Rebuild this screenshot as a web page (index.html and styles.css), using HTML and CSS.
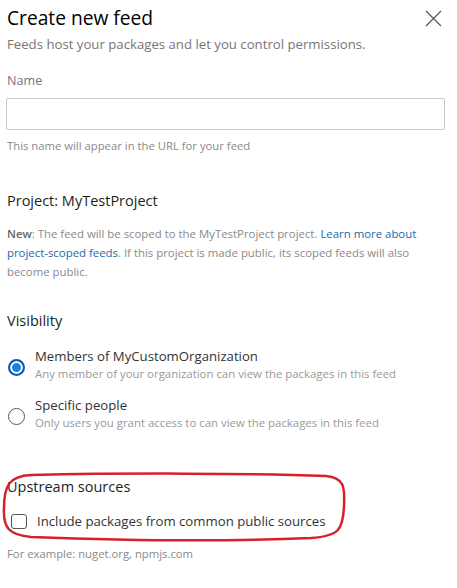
FILE: index.html
```html
<!DOCTYPE html>
<html lang="en">
<head>
    <meta charset="UTF-8">
    <meta name="viewport" content="width=device-width, initial-scale=1.0">
    <title>Create new feed</title>
    <link rel="stylesheet" href="styles.css">
</head>
<body>

    <div class="panel">
        <!-- Header -->
        <div class="panel-header">
            <h1>Create new feed</h1>
            <button class="close-btn" aria-label="Close">
                <svg width="17" height="17" viewBox="0 0 17 17">
                    <path d="M1 1 L16 16 M16 1 L1 16" stroke="#555" stroke-width="1.2" fill="none"/>
                </svg>
            </button>
        </div>
        <p class="subtitle">Feeds host your packages and let you control permissions.</p>

        <!-- Name -->
        <label class="field-label" for="feedName">Name</label>
        <input class="text-input" id="feedName" type="text">
        <p class="hint">This name will appear in the URL for your feed</p>

        <!-- Project -->
        <h2 class="section-title project-title">Project: MyTestProject</h2>
        <p class="note"><span class="note-tag">New</span>: The feed will be scoped to the MyTestProject project. <a href="#">Learn more about project-scoped feeds</a>. If this project is made public, its scoped feeds will also become public.</p>

        <!-- Visibility -->
        <h2 class="section-title visibility-title">Visibility</h2>
        <div class="radio-group">
            <label class="radio-option">
                <span class="radio checked"></span>
                <span class="option-text">
                    <span class="option-name">Members of MyCustomOrganization</span>
                    <span class="option-desc">Any member of your organization can view the packages in this feed</span>
                </span>
            </label>
            <label class="radio-option">
                <span class="radio"></span>
                <span class="option-text">
                    <span class="option-name">Specific people</span>
                    <span class="option-desc">Only users you grant access to can view the packages in this feed</span>
                </span>
            </label>
        </div>

        <!-- Upstream -->
        <div class="upstream">
            <h2 class="section-title upstream-title">Upstream sources</h2>
            <label class="check-option">
                <span class="checkbox"></span>
                <span class="check-text">Include packages from common public sources</span>
            </label>
            <svg class="highlight" width="346" height="70" viewBox="0 0 346 70">
                <path d="M30 3 C120 1 250 1 325 4 C343 6 344 14 343 34 C342 58 338 64 310 66 C220 70 110 68 30 65 C8 63 2 56 3 36 C3 14 8 4 30 3 Z" stroke="#d7202d" stroke-width="2.5" fill="none"/>
            </svg>
        </div>
        <p class="hint example">For example: nuget.org, npmjs.com</p>
    </div>

</body>
</html>
```

FILE: styles.css
```css
/* Basic Layout */
body {
    font-family: "Open Sans", "Noto Sans", Arial, sans-serif;
    margin: 0;
    background: white;
    color: #201f1e;
}

.panel {
    padding: 0 7px;
}

.panel-header {
    display: flex;
    justify-content: space-between;
    align-items: flex-start;
}

h1 {
    font-size: 19.2px;
    font-weight: 400;
    margin: 4px 0 0 0;
    line-height: 28px;
    color: #000;
}

.close-btn {
    background: none;
    border: none;
    padding: 0;
    margin: 10px 8px 0 0;
    cursor: pointer;
}

.subtitle {
    margin: 2px 0 0 0;
    font-size: 13.2px;
    line-height: 20px;
    color: #767676;
}

.field-label {
    display: block;
    margin-top: 17px;
    font-size: 12.6px;
    line-height: 20px;
    color: #767676;
}

.text-input {
    display: block;
    box-sizing: border-box;
    width: 439px;
    height: 32px;
    margin: 7px 0 0 -1px;
    border: 1px solid #c8c8c8;
    border-radius: 2px;
    outline: none;
}

.hint {
    margin: 7px 0 0 0;
    font-size: 11.3px;
    line-height: 18px;
    color: #8a8a8a;
}

.section-title {
    font-size: 14.5px;
    font-weight: 400;
    line-height: 22px;
    margin: 0;
    color: #201f1e;
}

.project-title {
    margin-top: 35px;
}

.note {
    max-width: 420px;
    margin: 12px 0 0 0;
    font-size: 11.4px;
    line-height: 19px;
    color: #8a8a8a;
}

.note-tag {
    font-weight: 600;
    color: #666;
}

.note a {
    color: #1a6aa8;
    text-decoration: none;
}

.visibility-title {
    margin-top: 29px;
}

/* Radio buttons */
.radio-group {
    margin-top: 16px;
}

.radio-option {
    display: flex;
    align-items: center;
    margin-bottom: 14px;
    cursor: pointer;
}

.radio {
    flex: none;
    box-sizing: border-box;
    width: 17px;
    height: 17px;
    margin: 4px 10px 0 1px;
    border: 1px solid #555;
    border-radius: 50%;
}

.radio.checked {
    border: 2px solid #0b5cad;
    background: #1a83e0;
    box-shadow: inset 0 0 0 2px white;
}

.option-text {
    display: flex;
    flex-direction: column;
}

.option-name {
    font-size: 13.2px;
    line-height: 17px;
    color: #333;
}

.option-desc {
    font-size: 11.4px;
    line-height: 18px;
    color: #999;
}

/* Upstream sources */
.upstream {
    position: relative;
    margin-top: 44px;
}

.check-option {
    display: flex;
    align-items: center;
    margin-top: 13px;
    cursor: pointer;
}

.checkbox {
    flex: none;
    box-sizing: border-box;
    width: 16px;
    height: 15px;
    margin: 0 10px 0 4px;
    border: 1px solid #555;
    border-radius: 3px;
}

.check-text {
    font-size: 13.2px;
    line-height: 20px;
    color: #333;
}

.highlight {
    position: absolute;
    left: -6px;
    top: -4px;
    pointer-events: none;
}

.example {
    margin-top: 14px;
}
```
